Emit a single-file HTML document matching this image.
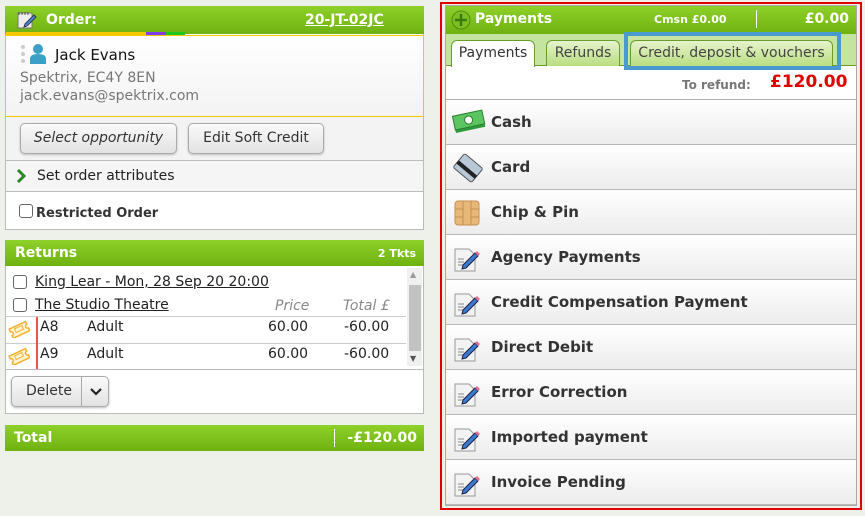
<!DOCTYPE html>
<html><head><meta charset="utf-8"><style>
*{box-sizing:border-box;margin:0;padding:0}
body{width:865px;height:516px;background:#eef0ea;font-family:"DejaVu Sans",Verdana,sans-serif;position:relative;overflow:hidden;color:#222}
.abs{position:absolute}
.gh{background:linear-gradient(#8ed12a,#6fb10f);color:#fff;font-weight:bold;font-size:14px}
.btn{position:absolute;height:31px;border:1px solid #aaa;border-radius:5px;background:linear-gradient(#fafafa,#e2e2e2);box-shadow:0 1px 2px #bbb;font-size:14px;color:#333;line-height:29px;text-align:center}
.row{position:absolute;left:446px;width:410px;height:45px;border-bottom:1px solid #b8b8b8;background:linear-gradient(#fff,#ececec);font-weight:bold;font-size:15px;color:#333;line-height:44px;padding-left:45px}
.row svg{position:absolute;left:6px;top:8px}
.cb{display:inline-block;width:14px;height:14px;border:1px solid #666;border-radius:3px;background:#fff;vertical-align:middle}
.tab{position:absolute;top:40px;height:26px;border:1px solid #6a9e2a;border-bottom:none;border-radius:6px 6px 0 0;background:linear-gradient(#e6f3cc,#b9de80);font-size:14px;color:#444;line-height:24px;text-align:center}
</style></head><body>
<!-- Order panel -->
<div class="abs" style="left:5px;top:6px;width:419px;height:224px;background:#fff;border:1px solid #bbb"></div>
<div class="abs gh" style="left:5px;top:6px;width:419px;height:28px;line-height:27px;font-size:14px">
 <svg class="abs" style="left:11px;top:4px" width="22" height="20" viewBox="0 0 22 20"><rect x="2" y="3" width="14" height="15" fill="#eee" stroke="#777"/><path d="M3 2v3M6 2v3M9 2v3M12 2v3" stroke="#555"/><path d="M9 14l9-9 2 2-9 9-3 1z" fill="#4a8fd0" stroke="#335"/></svg>
 <span class="abs" style="left:41px;top:1px">Order:</span>
 <span class="abs" style="left:300px;top:1px;text-decoration:underline">20-JT-02JC</span>
</div>
<div class="abs" style="left:6px;top:32px;width:140px;height:3px;background:#f6c800"></div>
<div class="abs" style="left:146px;top:32px;width:20px;height:3px;background:#7b3ff0"></div>
<div class="abs" style="left:166px;top:32px;width:19px;height:3px;background:#1ec81e"></div>
<div class="abs" style="left:5px;top:35px;width:419px;height:82px;border:1px solid #f0c800;background:linear-gradient(#fff,#f3f3f3)"></div>
<svg class="abs" style="left:20px;top:43px" width="28" height="22" viewBox="0 0 28 22"><rect x="1" y="2" width="4" height="4" rx="2" fill="#ccc"/><rect x="1" y="9" width="4" height="4" rx="2" fill="#ccc"/><rect x="1" y="16" width="4" height="4" rx="2" fill="#ccc"/><circle cx="18" cy="6" r="5" fill="#3aa0c8"/><path d="M10 21v-5q0-5 8-5t8 5v5z" fill="#3aa0c8"/></svg>
<div class="abs" style="left:55px;top:46px;font-size:15px;color:#111">Jack Evans</div>
<div class="abs" style="left:20px;top:70px;font-size:14px;color:#777">Spektrix, EC4Y 8EN</div>
<div class="abs" style="left:20px;top:88px;font-size:14px;color:#777">jack.evans@spektrix.com</div>
<div class="abs" style="left:6px;top:117px;width:417px;height:44px;background:#f3f3f3;border-bottom:1px solid #bbb"></div>
<div class="btn" style="left:20px;top:123px;width:157px;font-style:italic">Select opportunity</div>
<div class="btn" style="left:188px;top:123px;width:136px">Edit Soft Credit</div>
<div class="abs" style="left:6px;top:161px;width:417px;height:31px;background:#f5f5f5;border-bottom:1px solid #bbb;font-size:14px;line-height:30px;padding-left:31px">Set order attributes</div>
<svg class="abs" style="left:16px;top:169px" width="10" height="14"><path d="M2 1l6 6-6 6" stroke="#2a8a2a" stroke-width="3" fill="none"/></svg>
<div class="abs" style="left:19px;top:206px;font-size:13px;font-weight:bold;color:#333"><span class="cb" style="margin-right:3px;margin-top:-5px"></span>Restricted Order</div>

<!-- Returns -->
<div class="abs" style="left:5px;top:240px;width:419px;height:174px;background:#fff;border:1px solid #bbb"></div>
<div class="abs gh" style="left:5px;top:240px;width:419px;height:26px;line-height:27px">
 <span class="abs" style="left:10px">Returns</span><span class="abs" style="right:8px;font-size:11px">2 Tkts</span></div>
<div class="abs" style="left:407px;top:268px;width:15px;height:98px;background:#f0f0f0"></div>
<div class="abs" style="left:409px;top:285px;width:12px;height:66px;background:#c2c2c2"></div>
<div class="abs" style="left:410px;top:270px;font-size:8px;color:#999">▲</div>
<div class="abs" style="left:410px;top:354px;font-size:8px;color:#555">▼</div>
<div class="abs" style="left:13px;top:274px;font-size:14px"><span class="cb" style="margin-right:8px"></span><u>King Lear - Mon, 28 Sep 20 20:00</u></div>
<div class="abs" style="left:13px;top:297px;font-size:14px"><span class="cb" style="margin-right:8px"></span><u>The Studio Theatre</u></div>
<div class="abs" style="left:275px;top:298px;font-size:14px;color:#888;font-style:italic">Price</div>
<div class="abs" style="left:343px;top:298px;font-size:14px;color:#888;font-style:italic">Total £</div>
<div class="abs" style="left:6px;top:316px;width:400px;border-top:1px solid #ccc"></div>
<div class="abs" style="left:6px;top:343px;width:400px;border-top:1px solid #ccc"></div>
<div class="abs" style="left:6px;top:369px;width:417px;border-top:1px solid #bbb"></div>
<div class="abs" style="left:36px;top:317px;width:2px;height:52px;background:#f05050"></div>
<svg class="abs" style="left:8px;top:320px" width="22" height="18"><g transform="rotate(-25 11 9)"><path d="M2 5h18v3a2 2 0 0 0 0 4v3H2v-3a2 2 0 0 0 0-4z" fill="#fff4d0" stroke="#f5b030" stroke-width="1.5"/><rect x="7" y="7" width="8" height="4" fill="none" stroke="#f5b030"/></g></svg>
<svg class="abs" style="left:8px;top:347px" width="22" height="18"><g transform="rotate(-25 11 9)"><path d="M2 5h18v3a2 2 0 0 0 0 4v3H2v-3a2 2 0 0 0 0-4z" fill="#fff4d0" stroke="#f5b030" stroke-width="1.5"/><rect x="7" y="7" width="8" height="4" fill="none" stroke="#f5b030"/></g></svg>
<div class="abs" style="left:40px;top:319px;font-size:14px">A8</div><div class="abs" style="left:87px;top:319px;font-size:14px">Adult</div>
<div class="abs" style="left:268px;top:319px;font-size:14px">60.00</div><div class="abs" style="left:344px;top:319px;font-size:14px">-60.00</div>
<div class="abs" style="left:40px;top:346px;font-size:14px">A9</div><div class="abs" style="left:87px;top:346px;font-size:14px">Adult</div>
<div class="abs" style="left:268px;top:346px;font-size:14px">60.00</div><div class="abs" style="left:344px;top:346px;font-size:14px">-60.00</div>
<div class="btn" style="left:11px;top:376px;width:98px;text-align:left;padding-left:14px">Delete<span class="abs" style="left:69px;top:0;height:29px;border-left:1px solid #aaa;width:28px"><svg class="abs" style="left:8px;top:11px" width="12" height="8"><path d="M1 1l5 5 5-5" stroke="#222" stroke-width="2.2" fill="none"/></svg></span></div>

<div class="abs gh" style="left:5px;top:425px;width:419px;height:26px;line-height:27px">
 <span class="abs" style="left:9px">Total</span><span class="abs" style="left:329px;top:4px;height:18px;border-left:1px solid #fff"></span><span class="abs" style="right:7px">-£120.00</span></div>

<!-- Payments -->
<div class="abs" style="left:440px;top:2px;width:422px;height:508px;border:2px solid #e00000"></div>
<div class="abs" style="left:445px;top:5px;width:412px;height:501px;border:1px solid #aaa;background:#fff"></div>
<div class="abs gh" style="left:446px;top:6px;width:410px;height:28px;line-height:26px;font-size:14px">
 <svg class="abs" style="left:5px;top:4px" width="20" height="20"><circle cx="10" cy="10" r="9" fill="#7bc020" stroke="#4f8a10"/><path d="M10 4v12M4 10h12" stroke="#3c7a10" stroke-width="2.5"/></svg>
 <span class="abs" style="left:29px">Payments</span>
 <span class="abs" style="left:208px;font-size:11px;top:1px">Cmsn £0.00</span>
 <span class="abs" style="left:310px;top:4px;height:18px;border-left:1px solid #fff"></span>
 <span class="abs" style="right:7px">£0.00</span></div>
<div class="abs" style="left:446px;top:34px;width:410px;height:32px;background:#c5e4a0;border-bottom:1px solid #6a9e2a"></div>
<div class="tab" style="left:451px;width:84px;background:#fff;height:27px;color:#333">Payments</div>
<div class="tab" style="left:546px;width:74px">Refunds</div>
<div class="tab" style="left:630px;width:203px">Credit, deposit &amp; vouchers</div>
<div class="abs" style="left:624px;top:32px;width:217px;height:38px;border:4px solid #4a9ad0"></div>
<div class="abs" style="left:446px;top:67px;width:410px;height:33px;border-bottom:1px solid #b0b0b0"></div>
<div class="abs" style="left:682px;top:78px;font-size:12px;font-weight:bold;color:#777">To refund:</div>
<div class="abs" style="left:770px;top:72px;font-size:17px;font-weight:bold;color:#e00000">£120.00</div>

<div class="row" style="top:100px"><svg width="34" height="28"><g transform="rotate(-12 17 14)"><rect x="2" y="8" width="30" height="14" fill="#2e9a3a"/><rect x="2" y="5" width="30" height="14" fill="#5cc460" stroke="#2a8030"/><circle cx="17" cy="12" r="4" fill="#fff" stroke="#2a8030"/></g></svg>Cash</div>
<div class="row" style="top:145px"><svg width="32" height="30"><g transform="rotate(40 16 15)"><rect x="4" y="6" width="24" height="18" rx="2" fill="#b8c8d8" stroke="#555"/><rect x="4" y="15" width="24" height="4" fill="#222"/></g></svg>Card</div>
<div class="row" style="top:190px"><svg width="30" height="30"><rect x="3" y="3" width="24" height="24" rx="3" fill="#e8b878" stroke="#c49050"/><path d="M11 3v24M19 3v24M3 11h8M19 11h8M3 19h8M19 19h8" stroke="#c49050"/></svg>Chip &amp; Pin</div>
<div class="row" style="top:235px"><svg width="30" height="30"><path d="M3 6h14l6 6v16H3z" fill="#f3f3f3" stroke="#999"/><path d="M6 16h6M6 19h6M6 22h6" stroke="#888"/><path d="M11 22l12-12 3 3-12 12-4 1z" fill="#3a7ad0" stroke="#224"/><path d="M23 10l2-2 3 3-2 2z" fill="#e07090"/></svg>Agency Payments</div>
<div class="row" style="top:280px"><svg width="30" height="30"><path d="M3 6h14l6 6v16H3z" fill="#f3f3f3" stroke="#999"/><path d="M6 16h6M6 19h6M6 22h6" stroke="#888"/><path d="M11 22l12-12 3 3-12 12-4 1z" fill="#3a7ad0" stroke="#224"/><path d="M23 10l2-2 3 3-2 2z" fill="#e07090"/></svg>Credit Compensation Payment</div>
<div class="row" style="top:325px"><svg width="30" height="30"><path d="M3 6h14l6 6v16H3z" fill="#f3f3f3" stroke="#999"/><path d="M6 16h6M6 19h6M6 22h6" stroke="#888"/><path d="M11 22l12-12 3 3-12 12-4 1z" fill="#3a7ad0" stroke="#224"/><path d="M23 10l2-2 3 3-2 2z" fill="#e07090"/></svg>Direct Debit</div>
<div class="row" style="top:370px"><svg width="30" height="30"><path d="M3 6h14l6 6v16H3z" fill="#f3f3f3" stroke="#999"/><path d="M6 16h6M6 19h6M6 22h6" stroke="#888"/><path d="M11 22l12-12 3 3-12 12-4 1z" fill="#3a7ad0" stroke="#224"/><path d="M23 10l2-2 3 3-2 2z" fill="#e07090"/></svg>Error Correction</div>
<div class="row" style="top:415px"><svg width="30" height="30"><path d="M3 6h14l6 6v16H3z" fill="#f3f3f3" stroke="#999"/><path d="M6 16h6M6 19h6M6 22h6" stroke="#888"/><path d="M11 22l12-12 3 3-12 12-4 1z" fill="#3a7ad0" stroke="#224"/><path d="M23 10l2-2 3 3-2 2z" fill="#e07090"/></svg>Imported payment</div>
<div class="row" style="top:460px"><svg width="30" height="30"><path d="M3 6h14l6 6v16H3z" fill="#f3f3f3" stroke="#999"/><path d="M6 16h6M6 19h6M6 22h6" stroke="#888"/><path d="M11 22l12-12 3 3-12 12-4 1z" fill="#3a7ad0" stroke="#224"/><path d="M23 10l2-2 3 3-2 2z" fill="#e07090"/></svg>Invoice Pending</div>
</body></html>
